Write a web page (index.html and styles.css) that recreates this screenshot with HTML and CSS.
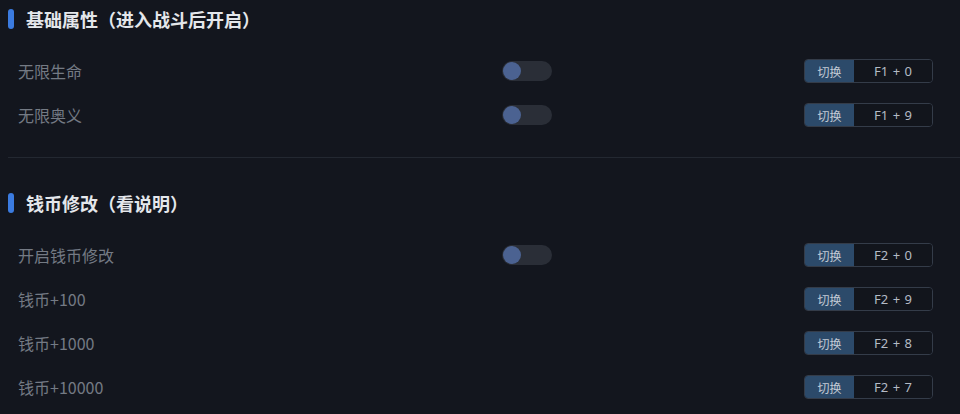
FILE: index.html
```html
<!DOCTYPE html>
<html lang="zh-CN">
<head>
  <meta charset="UTF-8">
  <meta name="viewport" content="width=device-width, initial-scale=1.0">
  <title>修改器</title>
  <link rel="stylesheet" href="styles.css">
</head>
<body>
<div class="panel">
  <div class="group">
    <h2 class="title">基础属性（进入战斗后开启）</h2>
    <div class="row">
      <span class="label">无限生命</span>
      <span class="switch"><i></i></span>
      <span></span>
      <span class="key"><b>切换</b><em>F1 + 0</em></span>
    </div>
    <div class="row">
      <span class="label">无限奥义</span>
      <span class="switch"><i></i></span>
      <span></span>
      <span class="key"><b>切换</b><em>F1 + 9</em></span>
    </div>
  </div>

  <div class="line"></div>

  <div class="group second">
    <h2 class="title">钱币修改（看说明）</h2>
    <div class="row">
      <span class="label">开启钱币修改</span>
      <span class="switch"><i></i></span>
      <span></span>
      <span class="key"><b>切换</b><em>F2 + 0</em></span>
    </div>
    <div class="row">
      <span class="label">钱币+100</span>
      <span></span>
      <span></span>
      <span class="key"><b>切换</b><em>F2 + 9</em></span>
    </div>
    <div class="row">
      <span class="label">钱币+1000</span>
      <span></span>
      <span></span>
      <span class="key"><b>切换</b><em>F2 + 8</em></span>
    </div>
    <div class="row">
      <span class="label">钱币+10000</span>
      <span></span>
      <span></span>
      <span class="key"><b>切换</b><em>F2 + 7</em></span>
    </div>
  </div>
</div>
</body>
</html>
```
FILE: styles.css
```css
* {
  padding: 0;
  margin: 0;
  box-sizing: border-box;
}

body {
  background: #13161e;
  font-family: "Noto Sans CJK SC", "Noto Sans", sans-serif;
  overflow: hidden;
}

.panel {
  padding: 0 27px 0 8px;
}

.title {
  display: flex;
  align-items: center;
  gap: 12px;
  height: 38px;
  margin-bottom: 11px;
  font-size: 18px;
  font-weight: bold;
  color: #e4e7eb;
}

.title::before {
  content: "";
  width: 6px;
  height: 20px;
  border-radius: 3px;
  background: #3b7be0;
}

.second .title {
  margin-top: 26px;
}

.row {
  display: grid;
  grid-template-columns: 484px 50px 1fr 129px;
  align-items: center;
  height: 44px;
  padding-left: 10px;
}

.label {
  font-size: 16px;
  color: #747a84;
}

.switch {
  position: relative;
  width: 50px;
  height: 20px;
  border-radius: 10px;
  background: #2a2e37;
}

.switch i {
  position: absolute;
  left: 1px;
  top: 1px;
  width: 18px;
  height: 18px;
  border-radius: 50%;
  background: #4b6291;
}

.key {
  display: flex;
  height: 24px;
  font-size: 12px;
  border-radius: 4px;
  overflow: hidden;
  border: 1px solid #343c49;
}

.key b {
  width: 49px;
  display: flex;
  align-items: center;
  justify-content: center;
  font-weight: normal;
  background: #2c4a6a;
  color: #c3cbd6;
}

.key em {
  flex: 1;
  display: flex;
  align-items: center;
  justify-content: center;
  font-style: normal;
  font-size: 13px;
  word-spacing: 1px;
  color: #b4bbc5;
  background: #12151c;
  font-family: "Noto Sans", sans-serif;
}

.line {
  height: 1px;
  margin: 20px -27px 0 0;
  background: #232831;
}
```
